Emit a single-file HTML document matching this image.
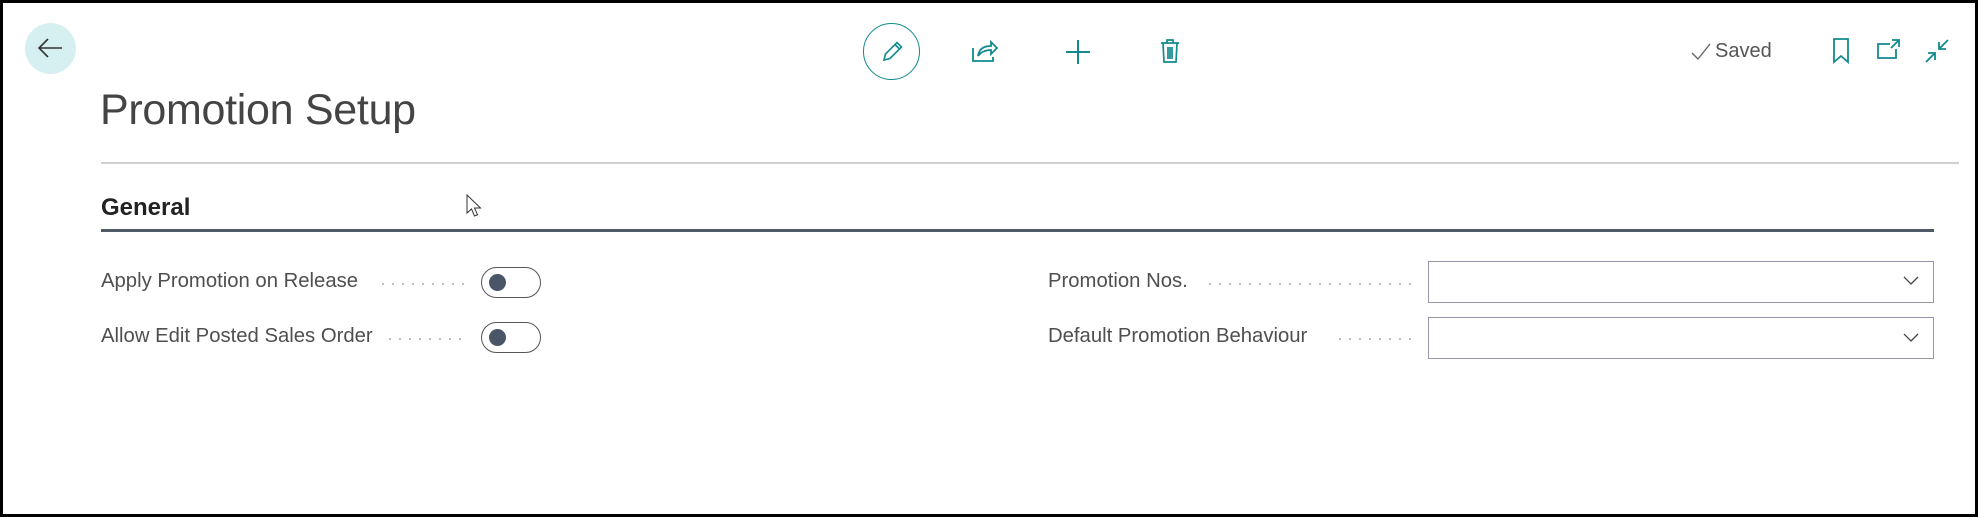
<!DOCTYPE html>
<html><head><meta charset="utf-8"><style>
*{margin:0;padding:0;box-sizing:border-box}
body{width:1978px;height:517px;background:#fff;position:relative;overflow:hidden;font-family:"Liberation Sans",sans-serif;}
.frame{position:absolute;left:0;top:0;width:1978px;height:517px;border:3px solid #000;}
.abs{position:absolute}
.lbl{position:absolute;font-size:20.3px;color:#4f4f4f;white-space:nowrap}
.dots{position:absolute;height:2px;background-image:radial-gradient(circle,#bbb 1px,transparent 1.3px);background-size:10px 2px;}
.tog{position:absolute;width:60px;height:31px;border:1.5px solid #555;border-radius:16px}
.tog::after{content:"";position:absolute;left:7px;top:6px;width:17px;height:17px;border-radius:50%;background:#4a5568}
.sel{position:absolute;left:1428px;width:506px;border:1.5px solid #9696ad;}
</style></head><body>
<div class="frame"></div>
<div class="abs" style="left:25px;top:23px;width:51px;height:51px;border-radius:50%;background:#d6eff1"></div>
<svg class="abs" style="left:36px;top:36px" width="28" height="24" viewBox="0 0 28 24"><path d="M26 12H3M12 3L3 12l9 9" fill="none" stroke="#333" stroke-width="1.6"/></svg>
<div class="abs" style="left:863px;top:23px;width:57px;height:57px;border-radius:50%;border:1.5px solid #128a8e"></div>
<svg class="abs" style="left:879px;top:39px" width="26" height="26" viewBox="0 0 26 26"><path d="M5 21l1.5-6L18 3.5l4.5 4.5L11 19.5z M16 5.5l4.5 4.5" fill="none" stroke="#128a8e" stroke-width="1.6"/></svg>
<svg class="abs" style="left:970px;top:38px" width="30" height="26" viewBox="0 0 30 26"><path d="M3 10v13h20v-4" fill="none" stroke="#128a8e" stroke-width="1.8"/><path d="M8 18c1-7 6-10 13-10V4l6 6-6 6v-4c-6 0-10 2-13 6z" fill="none" stroke="#128a8e" stroke-width="1.8"/></svg>
<svg class="abs" style="left:1065px;top:39px" width="26" height="26" viewBox="0 0 26 26"><path d="M13 1v24M1 13h24" stroke="#128a8e" stroke-width="2"/></svg>
<svg class="abs" style="left:1159px;top:38px" width="22" height="26" viewBox="0 0 22 26"><path d="M2 5h18M8 5V2h6v3M4 5l1 19h12l1-19M9 9v12M11 9v12M13 9v12" fill="none" stroke="#128a8e" stroke-width="1.7"/></svg>
<svg class="abs" style="left:1690px;top:42px" width="22" height="20" viewBox="0 0 22 20"><path d="M2 11l6 6L20 2" fill="none" stroke="#666" stroke-width="1.4"/></svg>
<div class="abs" style="left:1715px;top:40px;font-size:20px;color:#555">Saved</div>
<svg class="abs" style="left:1832px;top:38px" width="18" height="26" viewBox="0 0 18 26"><path d="M2 1h14v23l-7-6-7 6z" fill="none" stroke="#128a8e" stroke-width="1.8"/></svg>
<svg class="abs" style="left:1876px;top:38px" width="26" height="22" viewBox="0 0 26 22"><path d="M14 6H2v14h18v-9M16 2h7v7M23 2l-8 8" fill="none" stroke="#128a8e" stroke-width="1.8"/></svg>
<svg class="abs" style="left:1924px;top:38px" width="26" height="26" viewBox="0 0 26 26"><path d="M24 2l-9 9M15 4v7h7M2 24l9-9M4 15h7v7" fill="none" stroke="#128a8e" stroke-width="1.8"/></svg>
<div class="abs" style="left:100px;top:86px;font-size:43px;color:#444;font-weight:300;letter-spacing:-0.3px">Promotion Setup</div>
<div class="abs" style="left:101px;top:162px;width:1858px;height:2px;background:#d0d0d0"></div>
<div class="abs" style="left:101px;top:194px;font-size:24px;font-weight:bold;color:#222">General</div>
<div class="abs" style="left:101px;top:229px;width:1833px;height:3px;background:#4f5968"></div>
<svg class="abs" style="left:466px;top:194px" width="16" height="24" viewBox="0 0 16 24"><path d="M1 1v18l4.5-4 3 7 3-1.3-3-6.7h6z" fill="#fff" stroke="#333" stroke-width="1"/></svg>
<div class="lbl" style="left:101px;top:270px">Apply Promotion on Release</div>
<div class="dots" style="left:378px;top:283px;width:90px"></div>
<div class="tog" style="left:481px;top:267px"></div>
<div class="lbl" style="left:101px;top:325px">Allow Edit Posted Sales Order</div>
<div class="dots" style="left:385px;top:338px;width:83px"></div>
<div class="tog" style="left:481px;top:322px"></div>
<div class="lbl" style="left:1048px;top:270px">Promotion Nos.</div>
<div class="dots" style="left:1205px;top:283px;width:210px"></div>
<div class="sel" style="top:261px;height:42px"></div>
<div class="lbl" style="left:1048px;top:325px">Default Promotion Behaviour</div>
<div class="dots" style="left:1335px;top:338px;width:80px"></div>
<div class="sel" style="top:317px;height:42px"></div>
<svg class="abs" style="left:1903px;top:276px" width="16" height="10" viewBox="0 0 16 10"><path d="M1 1l7 7 7-7" fill="none" stroke="#444" stroke-width="1.3"/></svg>
<svg class="abs" style="left:1903px;top:333px" width="16" height="10" viewBox="0 0 16 10"><path d="M1 1l7 7 7-7" fill="none" stroke="#444" stroke-width="1.3"/></svg>
</body></html>
